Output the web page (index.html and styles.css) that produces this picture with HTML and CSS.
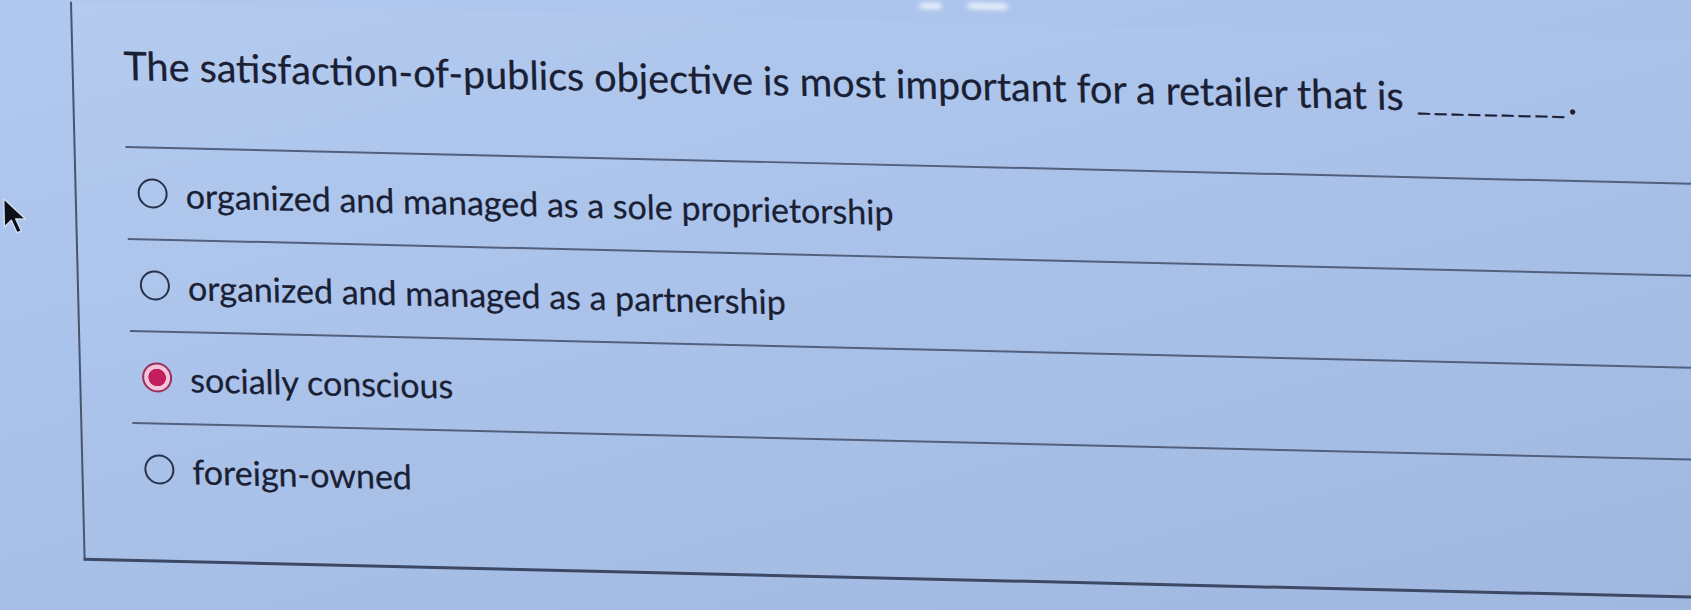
FILE: index.html
```html
<!DOCTYPE html>
<html lang="en">
<head>
<meta charset="utf-8">
<title>Quiz question</title>
<link rel="stylesheet" href="styles.css">
</head>
<body>
<div class="screen">
  <section class="question">
    <p class="prompt">The satisfaction-of-publics objective is most important for a retailer that is <span class="blank">_________</span>.</p>
    <ul class="answers">
      <li class="answer"><span class="radio"></span><span class="label">organized and managed as a sole proprietorship</span></li>
      <li class="answer"><span class="radio"></span><span class="label">organized and managed as a partnership</span></li>
      <li class="answer is-selected"><span class="radio"></span><span class="label">socially conscious</span></li>
      <li class="answer"><span class="radio"></span><span class="label">foreign-owned</span></li>
    </ul>
  </section>
  <div class="glare glare-a"></div>
  <div class="glare glare-b"></div>
  <svg class="cursor" viewBox="0 0 14 22" width="25" height="39" aria-hidden="true">
    <path d="M1 1 L1 17 L5 13 L8 20 L10.5 19 L7.5 12.2 L13 12.2 Z" fill="#0d0f16" stroke="#d3def0" stroke-width="0.8" stroke-linejoin="round"/>
  </svg>
</div>
</body>
</html>
```
FILE: styles.css
```css
html, body {
  margin: 0;
  height: 100%;
}

body {
  overflow: hidden;
  background: linear-gradient(165deg, #b2c9ef 0%, #a9c2ea 40%, #a0b8df 100%);
  font-family: Lato, "Open Sans", sans-serif;
  color: #1a2034;
}

.screen {
  position: relative;
  width: 1800px;
  height: 680px;
  transform: skew(1.4deg, 1.35deg);
  transform-origin: 0 0;
}

.question {
  box-sizing: border-box;
  width: 1720px;
  margin-left: 70px;
  padding: 37px 0 45px 50px;
  border-left: 2px solid #49556f;
  border-bottom: 3px solid #3c4864;
  background: linear-gradient(165deg, rgba(255,255,255,0.04), rgba(255,255,255,0));
}

.prompt {
  margin: 0 0 56px;
  height: 50px;
  font-size: 39.5px;
  line-height: 50px;
  white-space: nowrap;
  -webkit-text-stroke: 0.25px #1a2034;
}

.blank {
  font-size: 30px;
  line-height: 1;
  letter-spacing: 3px;
  margin-left: 3px;
}

.answers {
  list-style: none;
  margin: 0;
  padding: 0;
}

.answer {
  box-sizing: border-box;
  height: 92px;
  display: flex;
  align-items: center;
  gap: 18px;
  padding: 0 0 0 11px;
  border-top: 2px solid #52607e;
  font-size: 34px;
  -webkit-text-stroke: 0.25px #1a2034;
}

.radio {
  box-sizing: border-box;
  flex: none;
  width: 30px;
  height: 30px;
  border: 2.7px solid #27314a;
  border-radius: 50%;
}

.is-selected .radio {
  border: 2.5px solid #9a2f5e;
  background: radial-gradient(circle, #c41f5c 0 8.5px, #f4c3dc 9px 13px);
}

.label {
  white-space: nowrap;
}

.glare {
  position: absolute;
  height: 6px;
  border-radius: 4px;
  background: #f4f8ff;
  filter: blur(2.5px);
  opacity: 0.9;
}

.glare-a {
  left: 920px;
  width: 22px;
  top: -19px;
}

.glare-b {
  left: 968px;
  width: 40px;
  top: -20px;
}

.cursor {
  position: absolute;
  left: -3px;
  top: 197px;
}
```
